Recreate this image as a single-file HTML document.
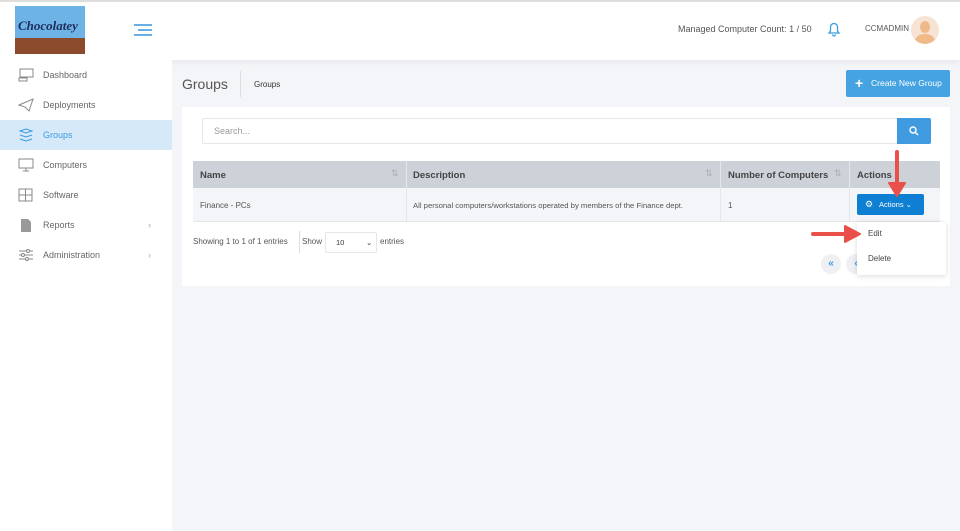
<!DOCTYPE html><html><head><style>
*{box-sizing:border-box;margin:0;padding:0}
body{width:960px;height:531px;overflow:hidden;background:#f4f5f8;font-family:"Liberation Sans",sans-serif;font-size:9px;color:#555;position:relative}
.abs{position:absolute}
.hdr{left:0;top:0;width:960px;height:60px;background:#fff;border-top:2px solid #ddd;box-shadow:0 2px 6px rgba(0,0,0,.06)}
.side{left:0;top:60px;width:172px;height:471px;background:#fff}
.nav{position:absolute;left:0;width:172px;height:30px;line-height:30px;padding-left:43px;font-size:9px;color:#666}
.nav svg{position:absolute;left:18px;top:8px}
.card{left:182px;top:107px;width:768px;height:179px;background:#fff}
</style></head><body>
<div class="abs hdr">
 <div class="abs" style="left:15px;top:4px;width:70px;height:48px;background:#6db3e6">
  <div class="abs" style="left:0;top:32px;width:70px;height:16px;background:#8b4a2b"></div>
  <div class="abs" style="left:3px;top:12px;font:italic bold 13px 'Liberation Serif',serif;color:#1f2d5c">Chocolatey</div>
 </div>
 <div class="abs" style="left:134px;top:22px;width:18px;height:1.5px;background:#6aaee6"></div>
 <div class="abs" style="left:138px;top:27px;width:14px;height:1.5px;background:#6aaee6"></div>
 <div class="abs" style="left:134px;top:32px;width:18px;height:1.5px;background:#6aaee6"></div>
 <div class="abs" style="left:678px;top:22px;font-size:9px;color:#555">Managed Computer Count: 1 / 50</div>
 <svg class="abs" style="left:827px;top:19px" width="14" height="16" viewBox="0 0 14 16"><path d="M2 12h10l-1.5-2V6a3.5 3.5 0 0 0-7 0v4z M5.5 13.5a1.5 1.5 0 0 0 3 0" fill="none" stroke="#3b9be0" stroke-width="1.3"/></svg>
 <div class="abs" style="left:865px;top:22px;font-size:8px;color:#555">CCMADMIN</div>
 <div class="abs" style="left:911px;top:14px;width:28px;height:28px;border-radius:50%;background:#f6e3d3;overflow:hidden"><div class="abs" style="left:9px;top:5px;width:10px;height:12px;border-radius:50%;background:#f0b988"></div><div class="abs" style="left:4px;top:18px;width:20px;height:14px;border-radius:50%;background:#f0b988"></div></div>
</div>
<div class="abs side">
 <div class="nav" style="top:0"><svg width="16" height="14"><rect x="2" y="1" width="13" height="8" fill="none" stroke="#888"/><rect x="1" y="10" width="8" height="3" fill="none" stroke="#888"/></svg>Dashboard</div>
 <div class="nav" style="top:30px"><svg width="16" height="14"><path d="M1 7L15 1L11 13L7 9Z" fill="none" stroke="#888"/></svg>Deployments</div>
 <div class="nav" style="top:60px;background:#d6e9f8;color:#3b9be0"><svg width="16" height="14"><path d="M2 3L8 1L14 3L8 5Z M2 7L8 9L14 7 M2 11L8 13L14 11" fill="none" stroke="#3b9be0"/></svg>Groups</div>
 <div class="nav" style="top:90px"><svg width="16" height="14"><rect x="1" y="1" width="14" height="9" fill="none" stroke="#888"/><path d="M8 10v3M5 13h6" stroke="#888"/></svg>Computers</div>
 <div class="nav" style="top:120px"><svg width="16" height="14"><rect x="1" y="1" width="13" height="12" fill="none" stroke="#888"/><path d="M7.5 1v12M1 7h13" stroke="#888"/></svg>Software</div>
 <div class="nav" style="top:150px"><svg width="16" height="14"><path d="M3 1h7l3 3v10H3z" fill="#999"/></svg>Reports<span class="abs" style="left:148px;color:#aaa">›</span></div>
 <div class="nav" style="top:180px"><svg width="16" height="14"><path d="M1 3h14M1 7h14M1 11h14" stroke="#888"/><circle cx="10" cy="3" r="1.5" fill="#fff" stroke="#888"/><circle cx="5" cy="7" r="1.5" fill="#fff" stroke="#888"/><circle cx="9" cy="11" r="1.5" fill="#fff" stroke="#888"/></svg>Administration<span class="abs" style="left:148px;color:#aaa">›</span></div>
</div>
<div class="abs" style="left:182px;top:76px;font-size:14px;color:#555">Groups</div>
<div class="abs" style="left:240px;top:71px;width:1px;height:26px;background:#ddd"></div>
<div class="abs" style="left:254px;top:80px;font-size:8px;color:#333">Groups</div>
<div class="abs" style="left:846px;top:70px;width:104px;height:27px;background:#45a3e1;border-radius:2px;color:#fff;font-size:8.5px;line-height:27px;padding-left:25px"><span class="abs" style="left:9px;top:0;font-size:14px;font-weight:bold">+</span>Create New Group</div>
<div class="abs card"></div>
<div class="abs" style="left:202px;top:118px;width:696px;height:26px;border:1px solid #e4e6ea;border-radius:2px;background:#fff;padding-left:11px;line-height:24px;color:#999;font-size:9px">Search...</div>
<div class="abs" style="left:897px;top:118px;width:34px;height:26px;background:#3f9ae0;border-radius:0 2px 2px 0"><svg class="abs" style="left:12px;top:8px" width="10" height="10"><circle cx="4" cy="4" r="3" fill="none" stroke="#fff" stroke-width="1.4"/><path d="M6.5 6.5L9 9" stroke="#fff" stroke-width="1.4"/></svg></div>
<div class="abs" style="left:193px;top:161px;width:747px;height:27px;background:#cdd2d9"></div>
<div class="abs" style="left:193px;top:188px;width:747px;height:34px;background:#f4f5f8;border-bottom:1px solid #e6e6e6"></div>
<div class="abs" style="left:406px;top:161px;width:1px;height:61px;background:#e4e6ea"></div>
<div class="abs" style="left:720px;top:161px;width:1px;height:61px;background:#e4e6ea"></div>
<div class="abs" style="left:849px;top:161px;width:1px;height:61px;background:#e4e6ea"></div>
<div class="abs" style="left:200px;top:170px;font-weight:bold;font-size:9.5px;color:#444">Name</div>
<div class="abs" style="left:391px;top:168px;color:#aaa">⇅</div>
<div class="abs" style="left:413px;top:170px;font-weight:bold;font-size:9.5px;color:#444">Description</div>
<div class="abs" style="left:705px;top:168px;color:#aaa">⇅</div>
<div class="abs" style="left:728px;top:170px;font-weight:bold;font-size:9.5px;color:#444">Number of Computers</div>
<div class="abs" style="left:834px;top:168px;color:#aaa">⇅</div>
<div class="abs" style="left:857px;top:170px;font-weight:bold;font-size:9.5px;color:#444">Actions</div>
<div class="abs" style="left:200px;top:201px;font-size:8px">Finance - PCs</div>
<div class="abs" style="left:413px;top:201px;font-size:7.7px">All personal computers/workstations operated by members of the Finance dept.</div>
<div class="abs" style="left:728px;top:201px;font-size:8px">1</div>
<div class="abs" style="left:857px;top:194px;width:67px;height:21px;background:#0e7fd2;border-radius:2px;color:#fff;font-size:7.5px;line-height:21px;padding-left:22px">Actions ⌄<span class="abs" style="left:8px;top:0;font-size:9px">⚙</span></div>
<div class="abs" style="left:193px;top:237px;font-size:8px">Showing 1 to 1 of 1 entries</div>
<div class="abs" style="left:299px;top:231px;width:1px;height:22px;background:#ddd"></div>
<div class="abs" style="left:302px;top:237px;font-size:8px">Show</div>
<div class="abs" style="left:325px;top:232px;width:52px;height:21px;border:1px solid #e4e6ea;border-radius:2px;font-size:7.5px;line-height:19px;padding-left:10px;color:#333">10<span class="abs" style="left:40px">⌄</span></div>
<div class="abs" style="left:380px;top:237px;font-size:8px">entries</div>
<div class="abs" style="left:821px;top:254px;width:20px;height:20px;border-radius:50%;background:#eef0f3;color:#3b9be0;font-weight:bold;text-align:center;line-height:19px;font-size:10px">«</div>
<div class="abs" style="left:846px;top:254px;width:20px;height:20px;border-radius:50%;background:#eef0f3;color:#3b9be0;font-weight:bold;text-align:center;line-height:19px;font-size:10px">‹</div>
<div class="abs" style="left:857px;top:222px;width:89px;height:53px;background:#fff;box-shadow:0 1px 6px rgba(0,0,0,.15);border-radius:2px"></div>
<div class="abs" style="left:868px;top:229px;font-size:8px;color:#444">Edit</div>
<div class="abs" style="left:868px;top:254px;font-size:8px;color:#444">Delete</div>
<svg class="abs" style="left:0;top:0" width="960" height="531"><g stroke="#e9504a" stroke-width="4" stroke-linecap="round" fill="#e9504a"><path d="M897 152V186"/><path d="M889 183L897 196L905 183Z" stroke-width="2" stroke-linejoin="round"/><path d="M813 234H848"/><path d="M845 226L860 234L845 242Z" stroke-width="2" stroke-linejoin="round"/></g></svg>
</body></html>
